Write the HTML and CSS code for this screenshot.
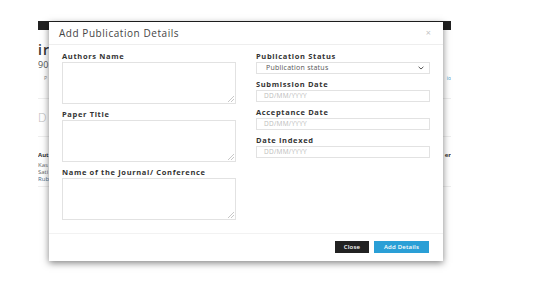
FILE: index.html
```html
<!DOCTYPE html>
<html>
<head>
<meta charset="utf-8">
<link rel="stylesheet" href="styles.css">
</head>
<body>
<div class="screen">
  <div class="page">
    <div class="topbar"></div>
    <div class="page-head">
      <div class="h1">ir</div>
      <div class="sub">90</div>
      <div class="row r1"><span class="muted">P</span><span class="link">io</span></div>
    </div>
    <div class="row r2"><span class="ghost">D</span></div>
    <div class="tbl">
      <div class="row th"><span>Aut</span><span>er</span></div>
      <div class="td">Kas</div>
      <div class="td">Sati</div>
      <div class="td blue">Rub</div>
    </div>
  </div>

  <div class="modal">
    <div class="modal-header">
      <span class="modal-title">Add Publication Details</span>
      <span class="modal-close">&times;</span>
    </div>
    <div class="modal-body">
      <div class="col">
        <div class="group">
          <label class="lbl">Authors Name</label>
          <textarea class="area"></textarea>
        </div>
        <div class="group">
          <label class="lbl">Paper Title</label>
          <textarea class="area"></textarea>
        </div>
        <div class="group">
          <label class="lbl">Name of the Journal/ Conference</label>
          <textarea class="area"></textarea>
        </div>
      </div>
      <div class="col">
        <div class="group">
          <label class="lbl">Publication Status</label>
          <div class="field select">
            <span>Publication status</span>
            <svg class="chev" width="6" height="4" viewBox="0 0 6 4"><path d="M0.6 0.8 L3 3 L5.4 0.8" fill="none" stroke="#444" stroke-width="0.9"/></svg>
          </div>
        </div>
        <div class="group">
          <label class="lbl">Submission Date</label>
          <div class="field ph">DD/MM/YYYY</div>
        </div>
        <div class="group">
          <label class="lbl">Acceptance Date</label>
          <div class="field ph">DD/MM/YYYY</div>
        </div>
        <div class="group">
          <label class="lbl">Date Indexed</label>
          <div class="field ph">DD/MM/YYYY</div>
        </div>
      </div>
    </div>
    <div class="modal-footer">
      <button class="btn btn-dark">Close</button>
      <button class="btn btn-blue">Add Details</button>
    </div>
  </div>
</div>
</body>
</html>
```

FILE: styles.css
```css
* { box-sizing: border-box; }
html, body { margin: 0; padding: 0; background: #fff; }
body { font-family: "Open Sans", "Liberation Sans", sans-serif; color: #333; }

.screen { position: relative; width: 545px; height: 290px; overflow: hidden; }

.page {
  margin: 21px 0 0 38px;
  width: 413px;
  height: 243px;
  background: #fff;
  overflow: hidden;
}
.topbar { height: 9px; background: #222; }
.page-head { padding-top: 12px; }
.h1 { font-size: 14px; line-height: 16px; font-weight: 600; color: #333; letter-spacing: 1px; }
.sub { font-size: 9px; line-height: 10px; margin-top: 2px; color: #555; }
.row { display: flex; justify-content: space-between; }
.r1 { margin-top: 5px; font-size: 5px; line-height: 6px; padding-left: 6px; border-bottom: 1px solid #eee; padding-bottom: 17px; }
.muted { color: #888; }
.link { color: #3a9fd0; }
.r2 { height: 38px; align-items: center; border-bottom: 1px solid #eee; }
.ghost { font-size: 12px; color: #bbb; font-weight: 300; }
.tbl { padding-top: 14px; border-bottom: 1px solid #eee; padding-bottom: 3px; }
.th { font-size: 6px; line-height: 8px; font-weight: 700; color: #333; margin-bottom: 3px; }
.td { font-size: 6px; line-height: 7px; color: #666; }
.td.blue { color: #4a6a8a; }

.modal {
  position: absolute;
  left: 49px;
  top: 22px;
  width: 394px;
  background: #fff;
  box-shadow: 0 2px 7px rgba(0,0,0,0.5);
}
.modal-header {
  height: 23px;
  border-bottom: 1px solid #eee;
  display: flex;
  align-items: center;
  justify-content: space-between;
  padding: 0 12px 0 10px;
}
.modal-title { font-size: 10px; letter-spacing: 0.55px; color: #444; }
.modal-close { font-size: 9px; color: #c4c4c4; line-height: 1; margin-top: -2px; }

.modal-body {
  display: grid;
  grid-template-columns: 174px 174px;
  column-gap: 20px;
  padding: 6px 13px 8px 13px;
}
.group { display: flex; flex-direction: column; margin-bottom: 5px; }
.lbl { font-size: 7.5px; line-height: 10px; font-weight: 700; letter-spacing: 0.65px; color: #333; margin-bottom: 1px; }
.area {
  display: block;
  width: 174px;
  height: 42px;
  border: 1px solid #e2e2e2;
  margin: 0;
  padding: 2px;
  font: inherit;
  resize: none;
  background: #fff linear-gradient(135deg, transparent 0 48%, #c8c8c8 48% 56%, transparent 56% 72%, #c8c8c8 72% 80%, transparent 80%) no-repeat right 1px bottom 1px / 6px 6px;
}
.field {
  height: 12px;
  border: 1px solid #e2e2e2;
  font-size: 6.5px;
  line-height: 10px;
  padding-left: 7px;
  color: #bbb;
  letter-spacing: 0.25px;
}
.select { display: flex; align-items: center; justify-content: space-between; color: #555; padding: 0 5px 0 9px; font-size: 7px; }
.chev { display: block; }

.modal-footer {
  border-top: 1px solid #f2f2f2;
  padding: 7px 14px 8px 0;
  display: flex;
  justify-content: flex-end;
  gap: 5px;
}
.btn {
  height: 12px;
  border: 0;
  border-radius: 0;
  padding: 0;
  font-family: "Open Sans", "Liberation Sans", sans-serif;
  font-size: 6px;
  font-weight: 600;
  color: #fff;
  line-height: 12px;
  letter-spacing: 0.2px;
}
.btn-dark { width: 34px; background: #222; }
.btn-blue { width: 55px; background: #2a9fd6; }
```
